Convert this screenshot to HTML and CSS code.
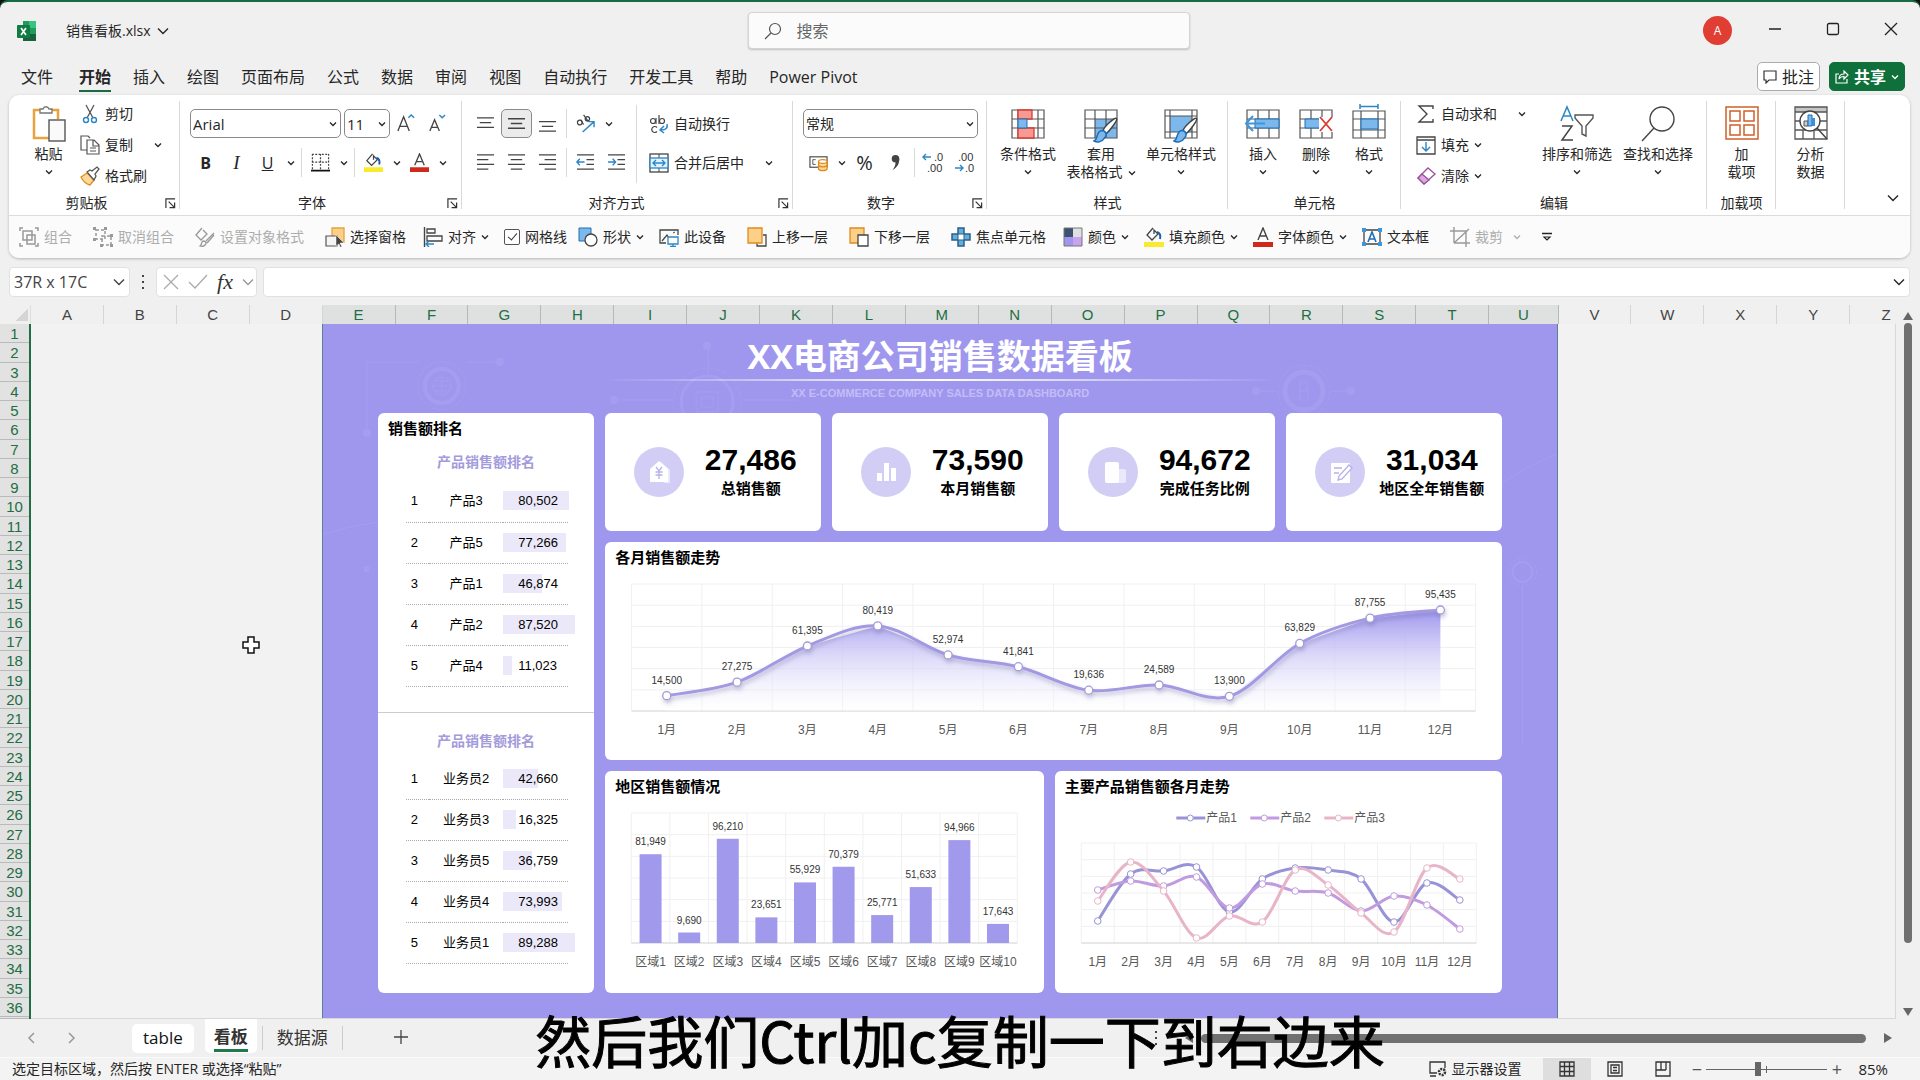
FILE: index.html
```html
<!DOCTYPE html>
<html lang="zh-CN">
<head>
    <meta charset="UTF-8">
    <meta name="viewport" content="width=device-width, initial-scale=1.0">
    <title>销售看板.xlsx</title>
    <link rel="stylesheet" href="styles.css">
</head>
<body>
    <svg class="defs" aria-hidden="true">
        <symbol id="chev" viewBox="0 0 8 8"><path d="M1 2.5l3 3 3-3" fill="none" stroke="currentColor" stroke-width="1.3"/></symbol>
        <symbol id="chev-big" viewBox="0 0 12 12"><path d="M1 3.5l5 5 5-5" fill="none" stroke="currentColor" stroke-width="1.4"/></symbol>
        <symbol id="launch" viewBox="0 0 12 12"><path d="M1 11V1h10M4 4l6 6M10.500 5v5.500H5" fill="none" stroke="#333" stroke-width="1.3"/></symbol>
        <symbol id="bucket" viewBox="0 0 20 20"><path d="M9 1L3 8l5 5 6-6-4-4v4" fill="none" stroke="#444" stroke-width="1.3"/><path d="M13 5c3 1 4 3 3 7" fill="none" stroke="#1a5fa8" stroke-width="2"/><path d="M0 15h20v5H0z" fill="#f8ea2c"/></symbol>
        <symbol id="font-color" viewBox="0 0 20 20"><path d="M5 13l5-12 5 12M7 9h6" fill="none" stroke="#444" stroke-width="1.4"/><path d="M0 15h20v5H0z" fill="#d0291b"/></symbol>
        <symbol id="brush" viewBox="0 0 16 18"><path d="M15 1c1 1-5 9-7 10l-2-2c1-3 8-9 9-8z" fill="#fff" stroke="#444"/><path d="M5 9c3 0 4 3 2 5-2 3-5 3-7 2 3-1 1-6 5-7z" fill="#7db8ec" stroke="#1e6fb8"/></symbol>
    </svg>

    <div class="app">
        <header class="titlebar">
            <svg class="logo" viewBox="0 0 20 20"><path d="M6 0h13v20H6z" fill="#1f9b5c"/><path d="M12 0h7v7h-7z" fill="#35c481"/><path d="M6 13h13v7H6z" fill="#17613d"/><rect y="4" width="13" height="13" rx="1" fill="#107c41"/><path d="M4 7l5 7M9 7l-5 7" stroke="#fff" stroke-width="1.7"/></svg>
            <button class="filename">销售看板.xlsx<svg class="chev-b"><use href="#chev-big"/></svg></button>
            <label class="search">
                <svg viewBox="0 0 18 18" width="18" height="18"><circle cx="11" cy="7" r="5.500" fill="none" stroke="#555" stroke-width="1.200"/><path d="M7 11l-6 6" stroke="#555" stroke-width="1.200"/></svg>
                <input type="text" placeholder="搜索" aria-label="搜索">
            </label>
            <div class="window-buttons">
                <button class="avatar">A</button>
                <button aria-label="最小化"><svg viewBox="0 0 14 14"><path d="M1 7h12" stroke="#222" stroke-width="1.300"/></svg></button>
                <button aria-label="最大化"><svg viewBox="0 0 14 14"><rect x="1.500" y="1.500" width="11" height="11" rx="1.500" fill="none" stroke="#222" stroke-width="1.300"/></svg></button>
                <button aria-label="关闭"><svg viewBox="0 0 14 14"><path d="M1 1l12 12M13 1L1 13" stroke="#222" stroke-width="1.300"/></svg></button>
            </div>
        </header>

        <nav class="menu">
            <button>文件</button>
            <button class="active">开始</button>
            <button>插入</button>
            <button>绘图</button>
            <button>页面布局</button>
            <button>公式</button>
            <button>数据</button>
            <button>审阅</button>
            <button>视图</button>
            <button>自动执行</button>
            <button>开发工具</button>
            <button>帮助</button>
            <button>Power Pivot</button>
            <div class="menu-right">
                <button class="comments"><svg viewBox="0 0 14 14" width="14" height="14"><path d="M1 1h12v9H6l-3 3v-3H1z" fill="none" stroke="#333" stroke-width="1.200"/></svg>批注</button>
                <button class="share"><svg viewBox="0 0 14 14" width="14" height="14"><path d="M4 4H1v9h11V9M4 9c0-3 2-5 5-5V1l4 4-4 4V6.500C7 6.500 5 7 4 9z" fill="none" stroke="#fff" stroke-width="1.200"/></svg>共享<svg class="chev"><use href="#chev"/></svg></button>
            </div>
        </nav>

        <section class="ribbon">
            <div class="groups">
                <div class="group clipboard">
                    <div class="group-body">
                        <button class="big paste">
                            <svg viewBox="0 0 34 36"><path d="M8 4H2v28h15M20 4h6v9" fill="none" stroke="#e8a33d" stroke-width="2.500"/><path d="M8 7V3h3c1-3 5-3 6 0h3v4z" fill="#fff" stroke="#777" stroke-width="1.300"/><rect x="17" y="14" width="16" height="21" fill="#fafafa" stroke="#555" stroke-width="1.400"/></svg>
                            <span>粘贴</span><svg class="chev"><use href="#chev"/></svg>
                        </button>
                        <div class="stack">
                            <button class="tool"><svg viewBox="0 0 20 20"><path d="M6 1l7 13M14 1L7 14" stroke="#555" stroke-width="1.300"/><circle cx="6" cy="16" r="2.500" fill="none" stroke="#2a86c8" stroke-width="1.400"/><circle cx="14" cy="16" r="2.500" fill="none" stroke="#2a86c8" stroke-width="1.400"/></svg>剪切</button>
                            <button class="tool copy"><svg viewBox="0 0 20 20"><path d="M7 15H1V1h7l2 2M7 5h7l5 5v9H7zM13 5v6h6M10 13h6M10 16h6" fill="none" stroke="#555" stroke-width="1.200"/></svg>复制<svg class="chev"><use href="#chev"/></svg></button>
                            <button class="tool"><svg viewBox="0 0 20 20"><path d="M1 11l6-4 7 7-4 5c-4-1-7-4-9-8z" fill="#fbd99b" stroke="#e08b1d" stroke-width="1.300"/><path d="M7 6l3-2 2 1 5-4 2 2-4 5 1 2-2 4z" fill="#fff" stroke="#555" stroke-width="1.300"/></svg>格式刷</button>
                        </div>
                    </div>
                    <div class="group-label">剪贴板<svg class="launch"><use href="#launch"/></svg></div>
                </div>

                <div class="group font">
                    <div class="group-body two-rows">
                        <div class="row">
                            <span class="select name"><select aria-label="字体"><option>Arial</option></select><svg class="chev"><use href="#chev"/></svg></span>
                            <span class="select size"><select aria-label="字号"><option>11</option></select><svg class="chev"><use href="#chev"/></svg></span>
                            <button class="ico" aria-label="增大字号"><svg viewBox="0 0 20 20"><path d="M2 18L8 3l6 15M4 13h8" fill="none" stroke="#444" stroke-width="1.400"/><path d="M13 4l3-3 3 3" fill="none" stroke="#2a86c8" stroke-width="1.500"/></svg></button>
                            <button class="ico" aria-label="减小字号"><svg viewBox="0 0 20 20"><path d="M3 18L8 6l5 12M5 14h6" fill="none" stroke="#444" stroke-width="1.400"/><path d="M13 1l3 3 3-3" fill="none" stroke="#2a86c8" stroke-width="1.500"/></svg></button>
                        </div>
                        <div class="row">
                            <button class="ico letter"><b>B</b></button>
                            <button class="ico letter serif"><i>I</i></button>
                            <button class="ico letter"><u>U</u></button>
                            <button class="arrow" aria-label="下划线选项"><svg class="chev"><use href="#chev"/></svg></button>
                            <span class="sep"></span>
                            <button class="ico" aria-label="边框"><svg viewBox="0 0 20 20"><path d="M1.500 1v16M10 1v16M18.500 1v16M1 1.500h18M1 9.500h18" fill="none" stroke="#444" stroke-width="1.300" stroke-dasharray="2 1.500"/><path d="M0 18.500h20" stroke="#111" stroke-width="2"/></svg></button>
                            <button class="arrow" aria-label="边框选项"><svg class="chev"><use href="#chev"/></svg></button>
                            <span class="sep"></span>
                            <button class="ico" aria-label="填充颜色"><svg><use href="#bucket"/></svg></button>
                            <button class="arrow" aria-label="填充选项"><svg class="chev"><use href="#chev"/></svg></button>
                            <button class="ico" aria-label="字体颜色"><svg><use href="#font-color"/></svg></button>
                            <button class="arrow" aria-label="颜色选项"><svg class="chev"><use href="#chev"/></svg></button>
                        </div>
                    </div>
                    <div class="group-label">字体<svg class="launch"><use href="#launch"/></svg></div>
                </div>

                <div class="group align">
                    <div class="group-body">
                        <div class="two-rows align-icons">
                            <div class="row">
                                <button class="ico" aria-label="顶端对齐"><svg viewBox="0 0 20 20"><path d="M1 4h18M4 9h12M1 14h18" stroke="#444" stroke-width="1.400"/></svg></button>
                                <button class="ico pressed" aria-label="垂直居中"><svg viewBox="0 0 20 20"><path d="M1 5h18M4 10h12M1 15h18" stroke="#444" stroke-width="1.400"/></svg></button>
                                <button class="ico" aria-label="底端对齐"><svg viewBox="0 0 20 20"><path d="M1 8h18M4 13h12M1 18h18" stroke="#444" stroke-width="1.400"/></svg></button>
                                <span class="sep"></span>
                                <button class="ico" aria-label="方向"><svg viewBox="0 0 20 20"><circle cx="4" cy="9" r="2.500" fill="none" stroke="#444" stroke-width="1.300"/><path d="M5 6l3 5M8 1l5 7" stroke="#444" stroke-width="1.300"/><circle cx="12" cy="5" r="2.300" fill="none" stroke="#444" stroke-width="1.300"/><path d="M7 19L19 8M13 8h6v6" fill="none" stroke="#2a86c8" stroke-width="1.500"/></svg></button>
                                <button class="arrow" aria-label="方向选项"><svg class="chev"><use href="#chev"/></svg></button>
                            </div>
                            <div class="row">
                                <button class="ico" aria-label="左对齐"><svg viewBox="0 0 20 20"><path d="M1 2h18M1 7h12M1 12h18M1 17h12" stroke="#444" stroke-width="1.400"/></svg></button>
                                <button class="ico" aria-label="居中"><svg viewBox="0 0 20 20"><path d="M1 2h18M4 7h12M1 12h18M4 17h12" stroke="#444" stroke-width="1.400"/></svg></button>
                                <button class="ico" aria-label="右对齐"><svg viewBox="0 0 20 20"><path d="M1 2h18M7 7h12M1 12h18M7 17h12" stroke="#444" stroke-width="1.400"/></svg></button>
                                <span class="sep"></span>
                                <button class="ico" aria-label="减少缩进"><svg viewBox="0 0 20 20"><path d="M1 2h18M11 7h8M11 12h8M1 17h18" stroke="#444" stroke-width="1.400"/><path d="M9 9.500H1M4 6L1 9.500 4 13" fill="none" stroke="#2a86c8" stroke-width="1.500"/></svg></button>
                                <button class="ico" aria-label="增加缩进"><svg viewBox="0 0 20 20"><path d="M1 2h18M11 7h8M11 12h8M1 17h18" stroke="#444" stroke-width="1.400"/><path d="M1 9.500h8M6 6l3 3.500L6 13" fill="none" stroke="#2a86c8" stroke-width="1.500"/></svg></button>
                            </div>
                        </div>
                        <span class="sep tall"></span>
                        <div class="two-rows">
                            <div class="row"><button class="tool"><svg viewBox="0 0 20 20"><circle cx="4" cy="7" r="2.500" fill="none" stroke="#444" stroke-width="1.200"/><path d="M7 4v6M10 1v9M8 13.500a3 3 0 1 0 0 4" fill="none" stroke="#444" stroke-width="1.200"/><circle cx="13" cy="7" r="2.500" fill="none" stroke="#444" stroke-width="1.200"/><path d="M18 10c1 4-1 6-6 6M15 12l-4 4 4 3" fill="none" stroke="#2a86c8" stroke-width="1.500"/></svg>自动换行</button></div>
                            <div class="row"><button class="tool merge"><svg viewBox="0 0 20 20"><rect x="1" y="1" width="18" height="18" fill="#fff" stroke="#444" stroke-width="1.300"/><path d="M10 1v18" stroke="#444"/><rect x="1" y="5" width="18" height="10" fill="#e3f1fb" stroke="#2a86c8" stroke-width="1.300"/><path d="M4 10h12M7 7l-3 3 3 3M13 7l3 3-3 3" fill="none" stroke="#2a86c8" stroke-width="1.400"/></svg>合并后居中<svg class="chev"><use href="#chev"/></svg></button></div>
                        </div>
                    </div>
                    <div class="group-label">对齐方式<svg class="launch"><use href="#launch"/></svg></div>
                </div>

                <div class="group number">
                    <div class="group-body two-rows">
                        <div class="row"><span class="select format"><select aria-label="数字格式"><option>常规</option></select><svg class="chev"><use href="#chev"/></svg></span></div>
                        <div class="row">
                            <button class="ico" aria-label="会计格式"><svg viewBox="0 0 20 20"><rect x="1" y="4" width="18" height="11" fill="none" stroke="#555" stroke-width="1.300"/><path d="M7 7H4v5h3" fill="none" stroke="#555"/><path d="M10 9v8c1 2 8 2 9 0V9" fill="#fbd99b" stroke="#e08b1d" stroke-width="1.300"/><ellipse cx="14.500" cy="9" rx="4.500" ry="2" fill="#fff" stroke="#e08b1d" stroke-width="1.300"/><path d="M10 13c1 2 8 2 9 0" fill="none" stroke="#e08b1d" stroke-width="1.300"/></svg></button>
                            <button class="arrow" aria-label="会计选项"><svg class="chev"><use href="#chev"/></svg></button>
                            <button class="ico percent">%</button>
                            <button class="ico" aria-label="千位分隔"><svg viewBox="0 0 20 20"><circle cx="10" cy="6" r="4" fill="#444"/><path d="M14 6c0 5-2 9-7 12 2-3 3-5 3-8z" fill="#444"/></svg></button>
                            <span class="sep"></span>
                            <button class="ico digits" aria-label="增加小数"><svg viewBox="0 0 24 24"><path d="M9 6H1M4 3L1 6l3 3" fill="none" stroke="#2a86c8" stroke-width="1.400"/><text x="12" y="10">.0</text><text x="5" y="21">.00</text></svg></button>
                            <button class="ico digits" aria-label="减少小数"><svg viewBox="0 0 24 24"><text x="5" y="10">.00</text><path d="M2 17h8M7 14l3 3-3 3" fill="none" stroke="#2a86c8" stroke-width="1.400"/><text x="12" y="21">.0</text></svg></button>
                        </div>
                    </div>
                    <div class="group-label">数字<svg class="launch"><use href="#launch"/></svg></div>
                </div>

                <div class="group plain style">
                    <div class="group-body">
                        <button class="big"><svg viewBox="0 0 34 36"><path d="M1 4h32v28H1zM1 13h32M1 22h32M7 4v28M27 4v28" fill="none" stroke="#555" stroke-width="1.200"/><path d="M7 4h14v9H7zM7 22h16v10H7z" fill="#f79a94" stroke="#d83b31" stroke-width="1.300"/><path d="M7 13h9v9H7z" fill="#7db8ec" stroke="#1e6fb8"/></svg><span>条件格式</span><svg class="chev"><use href="#chev"/></svg></button>
                        <button class="big"><svg viewBox="0 0 34 36"><path d="M11 13h22v19H11z" fill="#7db8ec"/><path d="M1 4h32v28H1zM1 13h32M1 22h32M11 4v28M22 4v28" fill="none" stroke="#555" stroke-width="1.200"/><svg x="9" y="11" width="26" height="27"><use href="#brush"/></svg></svg><span>套用</span><span>表格格式<svg class="chev"><use href="#chev"/></svg></span></button>
                        <button class="big"><svg viewBox="0 0 34 36"><path d="M6 10h22v16H6z" fill="#7db8ec"/><path d="M1 4h32v28H1zM1 10h32M1 26h32M6 4v28M28 4v28" fill="none" stroke="#555" stroke-width="1.200"/><svg x="9" y="11" width="26" height="27"><use href="#brush"/></svg></svg><span>单元格样式</span><svg class="chev"><use href="#chev"/></svg></button>
                    </div>
                    <div class="group-label">样式</div>
                </div>

                <div class="group plain cells">
                    <div class="group-body">
                        <button class="big"><svg viewBox="0 0 34 36"><path d="M1 4h32v28H1zM1 13h32M1 22h32M12 4v28M23 4v28" fill="none" stroke="#555" stroke-width="1.200"/><path d="M9 13h24v9H9z" fill="#7db8ec" stroke="#1e6fb8"/><path d="M19 17.500H0M7 10l-7 7.500L7 25" fill="none" stroke="#3c96dd" stroke-width="2"/></svg><span>插入</span><svg class="chev"><use href="#chev"/></svg></button>
                        <button class="big"><svg viewBox="0 0 34 36"><path d="M1 4h32v28H1zM1 13h32M1 22h32M12 4v28M23 4v28" fill="none" stroke="#555" stroke-width="1.200"/><path d="M6 13h14l3 4-3 5H6z" fill="#7db8ec" stroke="#1e6fb8"/><path d="M20 11h14v15H20z" fill="#fff"/><path d="M21 11l12 14M33 11L21 25" stroke="#d83b31" stroke-width="1.800"/></svg><span>删除</span><svg class="chev"><use href="#chev"/></svg></button>
                        <button class="big"><svg viewBox="0 0 34 36"><path d="M1 5h32v27H1zM1 13h32M1 24h32M9 5v27M26 5v27" fill="none" stroke="#555" stroke-width="1.200"/><path d="M9 13h17v10H9z" fill="#7db8ec" stroke="#1e6fb8"/><path d="M8 0.500h18M8-2v5M26-2v5" stroke="#2a86c8" stroke-width="1.500"/></svg><span>格式</span><svg class="chev"><use href="#chev"/></svg></button>
                    </div>
                    <div class="group-label">单元格</div>
                </div>

                <div class="group plain edit">
                    <div class="group-body">
                        <div class="stack">
                            <button class="tool sum"><svg viewBox="0 0 20 20"><path d="M17 5V2H3l8 8-8 8h14v-3" fill="none" stroke="#444" stroke-width="1.400"/></svg>自动求和<svg class="chev"><use href="#chev"/></svg></button>
                            <button class="tool"><svg viewBox="0 0 20 20"><path d="M1 2h18v17H1zM1 5h18" fill="none" stroke="#444" stroke-width="1.300"/><path d="M10 7v9M6 12l4 4 4-4" fill="none" stroke="#2a86c8" stroke-width="1.400"/></svg>填充<svg class="chev"><use href="#chev"/></svg></button>
                            <button class="tool"><svg viewBox="0 0 20 20"><path d="M12 2l7 6-11 10-6-6z" fill="#fff" stroke="#9b4f9f" stroke-width="1.300"/><path d="M6 8l7 6-5 4-6-6z" fill="#d9a8dc" stroke="#9b4f9f" stroke-width="1.300"/></svg>清除<svg class="chev"><use href="#chev"/></svg></button>
                        </div>
                        <button class="big"><svg viewBox="0 0 34 36"><path d="M1 15L7 1l6 14M3 10h8" fill="none" stroke="#2a86c8" stroke-width="1.500"/><path d="M2 20h10L2 34h11" fill="none" stroke="#444" stroke-width="1.500"/><path d="M15 9h18v3l-7 8v10l-4-2v-8l-7-8z" fill="none" stroke="#555" stroke-width="1.400"/></svg><span>排序和筛选</span><svg class="chev"><use href="#chev"/></svg></button>
                        <button class="big"><svg viewBox="0 0 34 36"><circle cx="21" cy="13" r="12" fill="none" stroke="#444" stroke-width="1.400"/><path d="M13 22L1 35" stroke="#444" stroke-width="1.400"/></svg><span>查找和选择</span><svg class="chev"><use href="#chev"/></svg></button>
                    </div>
                    <div class="group-label">编辑</div>
                </div>

                <div class="group plain single">
                    <div class="group-body">
                        <button class="big"><svg viewBox="0 0 34 36"><g fill="none" stroke="#d0602a" stroke-width="1.500"><rect x="1" y="1" width="32" height="32"/><rect x="5" y="5" width="10" height="10"/><rect x="19" y="5" width="10" height="10"/><rect x="5" y="19" width="10" height="10"/><rect x="19" y="19" width="10" height="10"/></g></svg><span>加</span><span>载项</span></button>
                    </div>
                    <div class="group-label">加载项</div>
                </div>

                <div class="group plain single">
                    <div class="group-body">
                        <button class="big"><svg viewBox="0 0 34 36"><path d="M1 1h32v5H1z" fill="#c6c6c6"/><path d="M1 1h32v32H1zM1 6h32M1 15h32M1 24h32M9 24v9M20 24v9" fill="none" stroke="#555" stroke-width="1.300"/><circle cx="16" cy="15" r="10" fill="#fff" stroke="#444" stroke-width="1.400"/><path d="M23 22l10 11" stroke="#444" stroke-width="1.500"/><path d="M10 15h4v5h-4z" fill="#ccc" stroke="#555"/><path d="M14 9h4v11h-4z" fill="#7db8ec" stroke="#1e6fb8"/><path d="M18 12h3v8h-3z" fill="#3c8fd4"/></svg><span>分析</span><span>数据</span></button>
                    </div>
                </div>
                <button class="collapse" aria-label="折叠功能区"><svg class="chev-b"><use href="#chev-big"/></svg></button>
            </div>

            <div class="quick">
                <button class="tool" disabled><svg viewBox="0 0 20 20"><path d="M1 4V1h3M16 1h3v3M19 16v3h-3M4 19H1v-3" fill="none" stroke="#999" stroke-width="1.500"/><path d="M4 4h9v9H4zM8 8h8v9H8z" fill="none" stroke="#999" stroke-width="1.500"/></svg>组合</button>
                <button class="tool" disabled><svg viewBox="0 0 20 20"><path d="M3 3h9v9H3zM9 9h9v9H9z" fill="none" stroke="#999" stroke-width="1.500" stroke-dasharray="3 2"/><path d="M0 0h3v3H0zM11 0h3v3h-3zM0 11h3v3H0zM17 7h3v3h-3zM17 17h3v3h-3zM7 17h3v3H7z" fill="#999"/></svg>取消组合</button>
                <button class="tool" disabled><svg viewBox="0 0 20 20"><path d="M7 1L1 8l5 5 6-6-4-4" fill="none" stroke="#999" stroke-width="1.300"/><path d="M19 6l-8 8M8 14c3 0 4 2 2 4s-5 1-5 1c2-1 1-4 3-5zM19 8l-7 8" fill="none" stroke="#999" stroke-width="1.300"/></svg>设置对象格式</button>
                <button class="tool tight"><svg viewBox="0 0 20 20"><path d="M7 1h12v14H7z" fill="#fcd088" stroke="#e8a33d" stroke-width="1.300"/><path d="M1 9h11v10H1z" fill="#f5f5f5" stroke="#555" stroke-width="1.200"/><path d="M11 8l8 8-4 0 2 4-2 0-1-3-3 2z" fill="#444" stroke="#fff" stroke-width=".5"/></svg>选择窗格</button>
                <button class="tool menu-tool"><svg viewBox="0 0 20 20"><path d="M1.500 0v20" stroke="#444" stroke-width="1.400"/><path d="M4 2h8v4H4zM4 9h15v5H4z" fill="none" stroke="#444" stroke-width="1.300"/><path d="M11 17H3M6 14l-3 3 3 3" fill="none" stroke="#2a86c8" stroke-width="1.400"/></svg>对齐<svg class="chev"><use href="#chev"/></svg></button>
                <label class="tool tighter"><input type="checkbox" checked>网格线</label>
                <button class="tool menu-tool"><svg viewBox="0 0 20 20"><path d="M1 1h12v13H1z" fill="#7db8ec" stroke="#1e6fb8"/><circle cx="13" cy="13" r="6" fill="#fff" stroke="#444" stroke-width="1.300"/></svg>形状<svg class="chev"><use href="#chev"/></svg></button>
                <button class="tool"><svg viewBox="0 0 20 20"><path d="M7 16H1V3h18v5M3 14l5-6 2 3" fill="none" stroke="#444" stroke-width="1.300"/><path d="M14 6l2-1" stroke="#444"/><path d="M9 10h10v7H9zM14 17v3M11 19.500h6" fill="#fff" stroke="#2a86c8" stroke-width="1.300"/></svg>此设备</button>
                <button class="tool"><svg viewBox="0 0 20 20"><path d="M16 8h3v11h-9v-3" fill="none" stroke="#444" stroke-width="1.300"/><path d="M1 1h14v15H1z" fill="#fcd088" stroke="#e08b1d" stroke-width="1.300"/></svg>上移一层</button>
                <button class="tool"><svg viewBox="0 0 20 20"><path d="M1 1h14v15H1z" fill="#fcd088" stroke="#e08b1d" stroke-width="1.300"/><path d="M9 8h10v11H9z" fill="#fff" stroke="#444" stroke-width="1.300"/></svg>下移一层</button>
                <button class="tool tight"><svg viewBox="0 0 20 20"><path d="M7 1h6v6h6v6h-6v6H7v-6H1V7h6z" fill="#5fb0e0" stroke="#2d5f86" stroke-width="1.500"/><path d="M7 7h6v6H7z" fill="#fff" stroke="#2d5f86"/></svg>焦点单元格</button>
                <button class="tool menu-tool"><svg viewBox="0 0 20 20"><path d="M1 1h9v9H1z" fill="#3d5270"/><path d="M10 1h9v9h-9z" fill="#dfe0e4"/><path d="M1 10h9v9H1z" fill="#a096ee"/><path d="M10 10h9v9h-9z" fill="#c6a4ee"/><path d="M1 1h18v18H1z" fill="none" stroke="#777"/></svg>颜色<svg class="chev"><use href="#chev"/></svg></button>
                <button class="tool menu-tool"><svg><use href="#bucket"/></svg>填充颜色<svg class="chev"><use href="#chev"/></svg></button>
                <button class="tool menu-tool"><svg><use href="#font-color"/></svg>字体颜色<svg class="chev"><use href="#chev"/></svg></button>
                <button class="tool"><svg viewBox="0 0 20 20"><path d="M2 3h16v14H2z" fill="none" stroke="#444" stroke-width="1.300"/><path d="M6 15l4-10 4 10M7 12h6" fill="none" stroke="#1e6fb8" stroke-width="1.600"/><path d="M0 1h4v4H0zM16 1h4v4h-4zM0 15h4v4H0zM16 15h4v4h-4z" fill="#3c96dd"/></svg>文本框</button>
                <button class="tool" disabled><svg viewBox="0 0 20 20"><path d="M4 0v16M0 4h16v16M4 16h16M4 16L19 2" fill="none" stroke="#999" stroke-width="1.400"/></svg>裁剪<svg class="chev far"><use href="#chev"/></svg></button>
                <button class="overflow" aria-label="更多"><svg viewBox="0 0 10 10" width="10" height="10"><path d="M0 1.500h10" stroke="#222" stroke-width="1.400"/><path d="M2 5l3 3 3-3z" fill="#fff" stroke="#222" stroke-width="1.200"/></svg></button>
            </div>
        </section>

        <div class="formula-bar">
            <label class="name-box"><input type="text" value="37R x 17C" aria-label="名称框"><svg class="chev-b"><use href="#chev-big"/></svg></label>
            <span class="dots"></span>
            <div class="fx">
                <button aria-label="取消"><svg viewBox="0 0 16 16" width="16" height="16"><path d="M1 1l14 14M15 1L1 15" stroke="#aaa" stroke-width="1.300"/></svg></button>
                <button aria-label="输入"><svg viewBox="0 0 20 16" width="20" height="16"><path d="M1 8l6 6L19 1" fill="none" stroke="#aaa" stroke-width="1.300"/></svg></button>
                <button class="fx-label">fx</button>
                <svg class="chev-b grey"><use href="#chev-big"/></svg>
            </div>
            <label class="formula"><input type="text" aria-label="编辑栏"><svg class="chev-b"><use href="#chev-big"/></svg></label>
        </div>

        <main class="workbook">
            <div class="corner"></div>
            <div class="col-heads" id="cols"></div>
            <div class="row-heads" id="rows"></div>
            <div class="sheet">
                <svg class="cursor" viewBox="0 0 18 18"><path d="M6 1h6v5h5v6h-5v5H6v-5H1V6h5z" fill="#fff" stroke="#111" stroke-width="1.500"/></svg>
                <div class="board">
                    <svg class="pattern" viewBox="0 0 1237 694" preserveAspectRatio="none">
                        <g fill="none" stroke="#fff">
                            <path d="M44 109V38H96M144 38h33M386 22v28M292 76h60M476 76h-56"/>
                            <circle cx="119" cy="62" r="24" stroke-dasharray="3 2"/><circle cx="119" cy="62" r="17" stroke-width="4"/><circle cx="119" cy="62" r="9"/><path d="M110 62h18M119 53v18M112 57h14M112 67h14"/>
                            <circle cx="385" cy="78" r="34" stroke-dasharray="5 2"/><circle cx="385" cy="78" r="26" stroke-width="3"/><path d="M374 68h22v20h-22zM379 73h12v10h-12z"/>
                            <circle cx="983" cy="67" r="26" stroke-dasharray="4 2"/><circle cx="983" cy="67" r="19" stroke-width="5"/><path d="M979 58v18h8v-9h-8M979 58h7v9"/><path d="M935 67h20M1010 67h20"/>
                            <circle cx="1202" cy="248" r="14" stroke-dasharray="3 2"/><circle cx="1202" cy="248" r="10" stroke-width="2"/><path d="M1202 262v160"/>
                            <path d="M1180 160q30-20 57-30M0 210q26-8 56-12"/>
                        </g>
                        <g fill="#fff"><circle cx="44" cy="109" r="4"/><circle cx="177" cy="38" r="4"/><circle cx="385" cy="22" r="4"/><circle cx="292" cy="76" r="4"/><circle cx="935" cy="67" r="4"/><circle cx="1030" cy="67" r="4"/><circle cx="44" cy="245" r="3"/></g>
                    </svg>
                    <div class="board-head">
                        <h1>XX电商公司销售数据看板</h1>
                        <p>XX E-COMMERCE COMPANY SALES DATA DASHBOARD</p>
                    </div>
                    <div class="cards">
                        <section class="card ranking">
                            <h2>销售额排名</h2>
                            <h3>产品销售额排名</h3>
                            <table id="rank-product"></table>
                            <h3 class="second">产品销售额排名</h3>
                            <table id="rank-staff"></table>
                        </section>
                        <section class="kpis">
                            <div class="card kpi"><svg viewBox="0 0 50 50"><circle cx="25" cy="25" r="25"/><path d="M19 22l8-7 9 8v13h-6z" fill="#ebe8fb"/><path d="M16 22l9-8 9 8v13H16z" fill="#fff"/><path d="M22 20l3 4 3-4M25 24v8M21.500 25h7M21.500 28h7" fill="none" stroke="#b7b0ec" stroke-width="1.300"/></svg><p><strong>27,486</strong>总销售额</p></div>
                            <div class="card kpi"><svg viewBox="0 0 50 50"><circle cx="25" cy="25" r="25"/><path d="M16 26h5v8h-5zM23 16h5v18h-5zM30 21h5v13h-5z" fill="#fff"/></svg><p><strong>73,590</strong>本月销售额</p></div>
                            <div class="card kpi"><svg viewBox="0 0 50 50"><circle cx="25" cy="25" r="25"/><rect x="26" y="22" width="12" height="14" rx="2" fill="#ebe8fb"/><rect x="17" y="15" width="14" height="21" rx="2" fill="#fff"/></svg><p><strong>94,672</strong>完成任务比例</p></div>
                            <div class="card kpi"><svg viewBox="0 0 50 50"><circle cx="25" cy="25" r="25"/><rect x="16" y="16" width="19" height="20" rx="1" fill="#fff"/><path d="M19 21h8M19 26h5" stroke="#b7b0ec" stroke-width="1.500"/><path d="M34 18l3 3-10 11-4 1 1-4z" fill="#fff" stroke="#b7b0ec" stroke-width="1.300"/></svg><p><strong>31,034</strong>地区全年销售额</p></div>
                        </section>
                        <section class="card trend"><h2>各月销售额走势</h2><svg id="trend" viewBox="0 0 896 188"></svg></section>
                        <section class="lower">
                            <div class="card region"><h2>地区销售额情况</h2><svg id="region" viewBox="0 0 438 192"></svg></div>
                            <div class="card products"><h2>主要产品销售额各月走势</h2><svg id="products" viewBox="0 0 447 192"></svg></div>
                        </section>
                    </div>
                </div>
            </div>
            <div class="vscroll"><i class="up"></i><span></span><i class="down"></i></div>
        </main>

        <footer class="sheet-tabs">
            <button class="nav" aria-label="上一个"><svg viewBox="0 0 12 12"><path d="M8 1L3 6l5 5" fill="none" stroke="#999" stroke-width="1.500"/></svg></button>
            <button class="nav" aria-label="下一个"><svg viewBox="0 0 12 12"><path d="M4 1l5 5-5 5" fill="none" stroke="#999" stroke-width="1.500"/></svg></button>
            <button class="tab hover">table</button>
            <button class="tab current"><span>看板</span></button>
            <button class="tab last">数据源</button>
            <button class="add" aria-label="新工作表"><svg viewBox="0 0 14 14"><path d="M7 0v14M0 7h14" stroke="#444" stroke-width="1.300"/></svg></button>
            <div class="hscroll"><span class="dots"></span><i class="left"></i><span class="thumb"></span><i class="right"></i></div>
        </footer>

        <div class="status">
            <span class="message">选定目标区域，然后按 ENTER 或选择“粘贴”</span>
            <button class="display"><svg viewBox="0 0 18 16" width="18" height="16"><path d="M8 12H1V1h15v6M1 15h6" fill="none" stroke="#333" stroke-width="1.300"/><circle cx="13" cy="11" r="3" fill="none" stroke="#333" stroke-width="2.500" stroke-dasharray="2 1"/></svg>显示器设置</button>
            <button class="view on" aria-label="普通"><svg viewBox="0 0 16 16"><path d="M1 1h14v14H1zM1 5.500h14M1 10.500h14M5.500 1v14M10.500 1v14" fill="none" stroke="#333" stroke-width="1.300"/></svg></button>
            <button class="view" aria-label="页面布局"><svg viewBox="0 0 16 16"><path d="M1 1h14v14H1zM4 4h8v8H4zM6 6.500h4M6 9.500h4" fill="none" stroke="#333" stroke-width="1.300"/></svg></button>
            <button class="view" aria-label="分页预览"><svg viewBox="0 0 16 16"><path d="M1 1h14v14H1zM6 1v8M11 1v8M1 9h10" fill="none" stroke="#333" stroke-width="1.300"/></svg></button>
            <button class="zoom">−</button>
            <input type="range" min="10" max="190" value="86" aria-label="缩放">
            <button class="zoom">+</button>
            <span class="percent-text">85%</span>
        </div>
        <p class="caption">然后我们Ctrl加c复制一下到右边来</p>
    </div>
    <script src="script.js"></script>
</body>
</html>
```
FILE: styles.css
```css
* {
    box-sizing: border-box;
}

body {
    margin: 0;
    background: #111;
    color: #262626;
    font-family: "Open Sans", "Noto Sans CJK SC", sans-serif;
    font-size: 14px;
    line-height: 18px;
}

button,
input,
select {
    margin: 0;
    padding: 0;
    border: none;
    background: none;
    color: inherit;
    font: inherit;
    white-space: nowrap;
}

h1, h2, h3, p {
    margin: 0;
}

.defs {
    position: absolute;
    width: 0;
    height: 0;
}

.app {
    position: relative;
    display: flex;
    flex-direction: column;
    height: 100vh;
    overflow: hidden;
    background: #f0f0f0;
    border-top: 2px solid #1a6b43;
    border-radius: 8px 8px 0 0;
}

.chev {
    width: 8px;
    height: 8px;
    flex: none;
}

.chev-b {
    width: 12px;
    height: 12px;
    flex: none;
}

.grey {
    color: #999;
}

/* title bar */
.titlebar {
    display: grid;
    grid-template-columns: 1fr 442px 1fr;
    grid-template-areas: "file search win";
    align-items: center;
    height: 59px;
    flex: none;
    padding: 0 0 2px 17px;
}

.logo {
    grid-area: file;
    width: 20px;
    height: 20px;
}

.filename {
    grid-area: file;
    justify-self: start;
    display: flex;
    align-items: center;
    gap: 6px;
    margin-left: 49px;
}

.search {
    grid-area: search;
    display: flex;
    align-items: center;
    gap: 15px;
    height: 37px;
    padding: 0 15px;
    background: #fbfbfb;
    border: 1px solid #d4d4d4;
    border-radius: 4px;
    box-shadow: 0 1px 2px rgba(0, 0, 0, 0.2);
    font-size: 16px;
}

.search input {
    flex: 1;
}

.search input::placeholder {
    color: #666;
}

.window-buttons {
    grid-area: win;
    display: flex;
    justify-content: flex-end;
    align-items: center;
}

.window-buttons button {
    width: 58px;
    height: 29px;
}

.window-buttons svg {
    width: 14px;
    height: 14px;
}

.window-buttons .avatar {
    width: 29px;
    margin-right: 14px;
    border-radius: 50%;
    background: #e03e33;
    color: #fff;
    font-size: 12px;
}

/* menu */
.menu {
    display: flex;
    height: 34px;
    flex: none;
    padding: 1px 15px 0 10px;
    font-size: 16px;
}

.menu > button {
    height: 30px;
    padding: 0 11px;
    line-height: 30px;
}

.menu .active {
    position: relative;
    margin-left: 4px;
    font-weight: bold;
}

.menu .active::after {
    content: "";
    position: absolute;
    right: 11px;
    bottom: 0;
    left: 11px;
    height: 2px;
    background: #1a6b43;
}

.menu-right {
    display: flex;
    gap: 9px;
    margin-left: auto;
}

.menu-right button {
    display: flex;
    align-items: center;
    gap: 5px;
    height: 29px;
    padding: 0 5px;
    border: 1px solid #ababab;
    border-radius: 5px;
    background: #fff;
}

.menu-right .share {
    background: #0f703b;
    border-color: #0f703b;
    color: #fff;
    font-weight: bold;
}

/* ribbon */
.ribbon {
    flex: none;
    margin: 0 10px 0 9px;
    background: #fff;
    border-radius: 10px;
    box-shadow: 0 1px 3px rgba(0, 0, 0, 0.25);
}

.groups {
    display: flex;
    height: 120px;
    padding-top: 3px;
}

.group {
    position: relative;
    display: flex;
    flex-direction: column;
}

.group::after {
    content: "";
    position: absolute;
    top: 3px;
    right: 0;
    bottom: 6px;
    width: 1px;
    background: #d9d9d9;
}

.group-body {
    display: flex;
    height: 95px;
}

.group-label {
    position: relative;
    height: 20px;
    padding-right: 16px;
    line-height: 20px;
    text-align: center;
}

.plain .group-label {
    padding-right: 0;
}

.launch {
    position: absolute;
    top: 5px;
    right: 4px;
    width: 11px;
    height: 11px;
}

.clipboard { width: 171px; }
.font { width: 282px; padding-left: 10px; }
.align { width: 331px; }
.number { width: 194px; padding-left: 10px; }
.style { width: 241px; }
.cells { width: 173px; }
.edit { width: 306px; }
.single { width: 69px; }

.font .group-label,
.number .group-label {
    padding-right: 28px;
}

.align .group-label {
    padding-right: 22px;
}

.align .group-body {
    padding-left: 8px;
}

.stack {
    display: flex;
    flex-direction: column;
}

.tool {
    display: flex;
    align-items: center;
    gap: 5px;
    height: 32px;
    white-space: nowrap;
}

.stack .tool {
    height: 31px;
}

.tool > svg:first-child {
    width: 20px;
    height: 20px;
    flex: none;
}

.tool:disabled {
    color: #adadad;
}

.copy .chev,
.merge .chev,
.sum .chev {
    margin-left: 16px;
}

.big {
    display: flex;
    flex-direction: column;
    align-items: center;
    padding-top: 8px;
}

.big > svg:first-child {
    width: 34px;
    height: 36px;
    margin-bottom: 3px;
    overflow: visible;
}

.big span {
    display: block;
    height: 18px;
    font-size: 14px;
}

.big > .chev {
    margin-top: 5px;
}

.big span .chev {
    margin-left: 5px;
}

.paste {
    width: 71px;
    padding-left: 8px;
}

.style .group-body {
    justify-content: space-between;
    padding: 0 12px 0 13px;
}

.cells .group-body {
    justify-content: space-between;
    padding: 0 15px 0 18px;
}

.edit .group-body {
    padding-left: 15px;
    gap: 11px;
}

.edit .stack {
    width: 115px;
}

.single .group-body {
    justify-content: center;
}

.group-body.two-rows {
    display: block;
}

.two-rows {
    padding-top: 6px;
}

.align-icons {
    width: 163px;
}

.row {
    display: flex;
    align-items: center;
    height: 39px;
}

.ico {
    display: flex;
    align-items: center;
    justify-content: center;
    width: 31px;
    height: 29px;
    flex: none;
}

.ico svg {
    width: 19px;
    height: 19px;
}

.pressed {
    background: #ebebeb;
    border: 1px solid #8a8a8a;
    border-radius: 5px;
}

.letter {
    font-size: 16px;
}

.serif {
    font-family: "Liberation Serif", serif;
    font-size: 19px;
}

.percent {
    font-size: 20px;
}

.digits svg {
    width: 24px;
    height: 24px;
    overflow: visible;
}

.digits text {
    font-family: "Liberation Sans", sans-serif;
    font-size: 11px;
    fill: #333;
}

.arrow {
    display: flex;
    align-items: center;
    justify-content: center;
    width: 15px;
    height: 29px;
}

.sep {
    width: 1px;
    height: 29px;
    margin: 0 3px;
    flex: none;
    background: #d9d9d9;
}

.tall {
    height: 78px;
    margin: 7px 12px 0 3px;
}

.select {
    position: relative;
    height: 29px;
    border: 1px solid #8a8a8a;
    border-radius: 5px;
}

.select select {
    width: 100%;
    height: 100%;
    padding-left: 2px;
    appearance: none;
}

.select .chev {
    position: absolute;
    top: 10px;
    right: 3px;
}

.name { width: 151px; margin-right: 3px; font-size: 15px; }
.size { width: 46px; font-size: 15px; }
.format { width: 175px; }

.collapse {
    align-self: flex-end;
    margin: 0 11px 7px auto;
}

.quick {
    display: flex;
    align-items: center;
    gap: 21px;
    height: 43px;
    padding-left: 10px;
    background: #fbfbfb;
    border-top: 1px solid #dcdcdc;
    border-radius: 0 0 10px 10px;
}

.quick .tight { margin-right: -4px; }
.quick .tighter { margin-right: -10px; }
.quick .menu-tool { margin-right: -6px; }
.quick .far { margin-left: 5px; }
.quick input {
    appearance: none;
    width: 16px;
    height: 16px;
    border: 1px solid #555;
    border-radius: 2px;
    background: #fff;
}

.quick input:checked::after {
    content: "";
    display: block;
    width: 4px;
    height: 8px;
    margin: 1px 0 0 5px;
    border: solid #333;
    border-width: 0 1px 1px 0;
    rotate: 40deg;
}

/* formula bar */
.formula-bar {
    display: flex;
    height: 30px;
    flex: none;
    margin: 9px 10px 8px 9px;
}

.name-box,
.fx,
.formula {
    display: flex;
    align-items: center;
    background: #fff;
    border: 1px solid #e1e1e1;
    border-radius: 4px;
}

.name-box {
    width: 121px;
    padding: 0 4px;
    color: #444;
    font-size: 16px;
}

.name-box input {
    width: 100%;
}

.dots {
    width: 2px;
    height: 14px;
    margin: 8px 12px;
    background: repeating-linear-gradient(#444 0 2px, transparent 2px 6px);
}

.fx {
    justify-content: space-between;
    width: 101px;
    padding: 0 2px 0 6px;
}

.fx svg {
    display: block;
}

.fx-label {
    color: #333;
    font: italic 22px "Liberation Serif", serif;
}

.formula {
    flex: 1;
    margin-left: 6px;
    padding-right: 4px;
}

.formula input {
    flex: 1;
}

/* workbook */
.workbook {
    display: grid;
    grid-template-columns: 31px 1fr 24px;
    grid-template-rows: 19px 1fr;
    flex: 1;
    min-height: 0;
    font-family: "Liberation Sans", "Noto Sans CJK SC", sans-serif;
}

.corner {
    border-right: 1px solid #ddd;
    background: linear-gradient(135deg, transparent 50%, #d5d5d5 50%) 16px 4px / 12px 12px no-repeat;
}

/* column U is a little narrower than the others */
.col-heads {
    display: grid;
    grid-template-columns: repeat(20, 3.91%) 3.72% repeat(5, 3.91%);
    overflow: hidden;
    color: #444;
    font-size: 15px;
    line-height: 20px;
    text-align: center;
}

.col-heads span {
    border-right: 1px solid #d5d5d5;
    border-bottom: 1px solid #ccc;
}

.col-heads .picked {
    background: #dfe1e0;
    border-right-color: #b4b8b6;
    border-bottom: 2px solid #1f6e45;
    color: #1f6e45;
}

.row-heads {
    grid-column: 1;
    display: flex;
    flex-direction: column;
    overflow: hidden;
    background: #e1e2e1;
    border-right: 2px solid #1f6e45;
    color: #1f6e45;
    font-size: 15px;
    text-align: center;
}

.row-heads span {
    flex: 1;
    min-height: 0;
    border-bottom: 1px solid #b9bbba;
    line-height: 20px;
}

.row-heads .rest {
    flex: 0 0 2px;
}

.sheet {
    position: relative;
    min-height: 0;
    padding-left: 15.6%;
    background: #f2f2f2;
    border-right: 1px solid #d8d8d8;
    border-bottom: 1px solid #d8d8d8;
}

.cursor {
    position: absolute;
    top: 45%;
    left: 11.3%;
    width: 18px;
    height: 18px;
}

.board {
    position: relative;
    display: flex;
    flex-direction: column;
    width: 78.6%;
    height: 100%;
    padding: 0 55px 25px;
    background: #9f97ee;
    border: 1px solid #5b7f95;
    border-width: 0 1px;
}

.pattern {
    position: absolute;
    inset: 0;
    width: 100%;
    height: 100%;
    opacity: 0.06;
}

.board-head {
    position: relative;
    height: 89px;
    flex: none;
    padding-top: 9px;
    color: #fff;
    text-align: center;
}

.board-head h1 {
    font-family: "Open Sans", "Noto Sans CJK SC", sans-serif;
    font-size: 34px;
    line-height: 46px;
}

.board-head h1::after {
    content: "";
    display: block;
    width: 60%;
    height: 2px;
    margin: 0 auto;
    background: linear-gradient(90deg, transparent, #fff, transparent);
}

.board-head p {
    margin-top: 3px;
    color: #c3bdf5;
    font-size: 11px;
    font-weight: bold;
}

.cards {
    position: relative;
    display: grid;
    grid-template-columns: 216fr 896fr;
    grid-template-rows: 118fr 218fr 222fr;
    gap: 11px;
    flex: 1;
    min-height: 0;
}

.card {
    min-width: 0;
    min-height: 0;
    background: #fff;
    border-radius: 6px;
}

.card h2 {
    height: 30px;
    padding-left: 10px;
    color: #000;
    font-size: 15px;
    line-height: 32px;
}

.ranking {
    grid-row: 1 / 4;
}

.ranking h3 {
    height: 38px;
    color: #a39bdc;
    font-size: 14px;
    line-height: 38px;
    text-align: center;
}

.ranking .second {
    height: 47px;
    margin-top: 25px;
    padding-top: 9px;
    border-top: 1px solid #ccc;
}

.ranking table {
    width: 75%;
    margin-left: 28px;
    border-collapse: collapse;
    table-layout: fixed;
    color: #000;
    font-size: 13px;
}

.ranking td {
    position: relative;
    height: 41px;
    padding: 0;
    border-bottom: 1px dotted #aaa;
    text-align: center;
}

.ranking td:first-child {
    width: 23px;
    padding-right: 6px;
}

.ranking td:last-child {
    width: 40%;
    padding-left: 15px;
    text-align: left;
}

.ranking .bar {
    position: absolute;
    top: 10px;
    left: 0;
    height: 19px;
    background: #ebe9f9;
}

.ranking .value {
    position: relative;
}

.kpis {
    display: grid;
    grid-template-columns: repeat(4, 1fr);
    gap: 11px;
}

.kpi {
    display: flex;
    align-items: center;
    gap: 13px;
    padding: 0 17px 0 29px;
}

.kpi svg {
    width: 50px;
    height: 50px;
    flex: none;
}

.kpi circle {
    fill: #d2cdf5;
}

.kpi p {
    flex: 1;
    color: #000;
    font-size: 15px;
    font-weight: bold;
    line-height: 24px;
    text-align: center;
    white-space: nowrap;
}

.kpi strong {
    display: block;
    font-size: 30px;
    line-height: 34px;
}

.lower {
    display: grid;
    grid-template-columns: 438fr 447fr;
    gap: 11px;
    min-height: 0;
}

.trend,
.region,
.products {
    display: flex;
    flex-direction: column;
}

.trend svg,
.region svg,
.products svg {
    flex: 1;
    width: 100%;
    min-height: 0;
}

.grid-line { stroke: #f0f0f0; }
.axis-line { stroke: #d0d0d0; }
.data-label { font-size: 10px; fill: #333; text-anchor: middle; }
.axis-label { font-size: 12px; fill: #595959; text-anchor: middle; }
.legend-label { font-size: 12px; fill: #595959; }

/* scrollbars */
.vscroll {
    grid-area: 1 / 3 / 3 / 4;
    display: flex;
    flex-direction: column;
    align-items: center;
    padding: 7px 0 3px;
}

.vscroll span {
    flex: 0 0 88%;
    width: 8px;
    margin-top: 3px;
    border-radius: 4px;
    background: #707070;
}

.vscroll .down {
    margin-top: auto;
}

.up, .down, .left, .right {
    border: 5px solid transparent;
}

.up { border-top: 0; border-bottom: 8px solid #666; }
.down { border-bottom: 0; border-top: 8px solid #666; }
.left { border-left: 0; border-right: 8px solid #666; }
.right { border-right: 0; border-left: 8px solid #666; }

.sheet-tabs {
    display: flex;
    align-items: center;
    height: 38px;
    flex: none;
    padding-left: 12px;
    font-size: 17px;
}

.nav {
    width: 39px;
}

.nav svg {
    width: 12px;
    height: 12px;
}

.add svg {
    width: 14px;
    height: 14px;
}

.tab {
    height: 29px;
    padding: 0 11px;
    color: #333;
}

.tab.hover {
    margin: 0 11px 0 42px;
    background: #fff;
    border-radius: 5px;
    color: #111;
}

.tab.current {
    align-self: flex-start;
    height: 34px;
    padding: 0 9px;
    background: #fff;
    border-radius: 0 0 5px 5px;
    font-weight: bold;
}

.current span {
    display: block;
    height: 31px;
    line-height: 32px;
    border-bottom: 3px solid #1f7a4b;
}

.tab.last {
    height: 24px;
    margin-left: 5px;
    padding: 0 14px;
    border: solid #ccc;
    border-width: 0 1px;
}

.add {
    margin-left: 51px;
}

.hscroll {
    display: flex;
    align-items: center;
    width: 737px;
    margin: 0 28px 0 auto;
}

.hscroll .dots {
    margin: 0 28px 0 0;
}

.hscroll .thumb {
    flex: 1;
    height: 9px;
    margin: 0 18px 0 8px;
    border-radius: 5px;
    background: #707070;
}

.status {
    display: flex;
    align-items: center;
    height: 23px;
    flex: none;
    padding: 0 32px 0 12px;
    background: #f3f3f3;
    border-top: 1px solid #fafafa;
}

.message {
    margin-right: auto;
}

.display {
    display: flex;
    align-items: center;
    gap: 4px;
    margin-right: 22px;
}

.view {
    width: 48px;
    height: 23px;
}

.view svg {
    display: block;
    width: 16px;
    height: 16px;
    margin: auto;
}

.view.on {
    background: #dedede;
}

.zoom {
    width: 19px;
    color: #555;
    font-size: 18px;
}

.status input {
    appearance: none;
    width: 121px;
    height: 15px;
    background: linear-gradient(#666, #666) center / 100% 1px no-repeat, linear-gradient(#666, #666) center / 1px 7px no-repeat;
}

.status input::-webkit-slider-thumb {
    appearance: none;
    width: 6px;
    height: 14px;
    background: #666;
}

.percent-text {
    margin-left: 12px;
    font-size: 15px;
}

.caption {
    position: absolute;
    right: 0;
    bottom: 5px;
    left: 0;
    color: #000;
    font-family: "Noto Sans CJK SC", sans-serif;
    font-size: 56px;
    line-height: 72px;
    text-align: center;
    pointer-events: none;
    -webkit-text-stroke: 1px #000;
}
```
FILE: script.js
```js
const months = ["1月", "2月", "3月", "4月", "5月", "6月", "7月", "8月", "9月", "10月", "11月", "12月"];

// column and row headings
const cols = document.getElementById("cols");
"ABCDEFGHIJKLMNOPQRSTUVWXYZ".split("").forEach((letter) => {
    const span = document.createElement("span");
    span.textContent = letter;
    if (letter >= "E" && letter <= "U") span.className = "picked";
    cols.appendChild(span);
});

const rows = document.getElementById("rows");
for (let i = 1; i <= 37; i++) {
    const span = document.createElement("span");
    if (i <= 36) span.textContent = i;
    else span.className = "rest";
    rows.appendChild(span);
}

// ranking tables
function ranking(id, data) {
    const max = Math.max(...data.map((d) => d[1]));
    document.getElementById(id).innerHTML = data.map((d, i) => `<tr><td>${i + 1}</td><td>${d[0]}</td>
        <td><span class="bar" style="width: ${Math.round(d[1] / max * 110)}%"></span><span class="value">${d[1].toLocaleString("en-US")}</span></td></tr>`).join("");
}

ranking("rank-product", [["产品3", 80502], ["产品5", 77266], ["产品1", 46874], ["产品2", 87520], ["产品4", 11023]]);
ranking("rank-staff", [["业务员2", 42660], ["业务员3", 16325], ["业务员5", 36759], ["业务员4", 73993], ["业务员1", 89288]]);

// charts
function grid(box, count) {
    let out = "";
    for (let i = 0; i <= count; i++) {
        const x = box.x + box.w * i / count;
        out += `<path class="grid-line" d="M${x} ${box.y}V${box.y + box.h}"/>`;
    }
    for (let i = 0; i < 6; i++) {
        const y = box.y + box.h * i / 6;
        out += `<path class="grid-line" d="M${box.x} ${y}H${box.x + box.w}"/>`;
    }
    return out + `<path class="axis-line" d="M${box.x} ${box.y + box.h}H${box.x + box.w}"/>`;
}

function place(box, data, max) {
    return data.map((v, i) => [box.x + box.w * (i + 0.5) / data.length, box.y + box.h * (1 - v / max)]);
}

function smooth(p) {
    let d = `M${p[0]}`;
    for (let i = 0; i < p.length - 1; i++) {
        const a = p[i - 1] || p[i], b = p[i], c = p[i + 1], e = p[i + 2] || c;
        d += `C${b[0] + (c[0] - a[0]) / 6} ${b[1] + (c[1] - a[1]) / 6} ${c[0] - (e[0] - b[0]) / 6} ${c[1] - (e[1] - b[1]) / 6} ${c}`;
    }
    return d;
}

function labels(points, names, y) {
    return points.map((p, i) => `<text class="axis-label" x="${p[0]}" y="${y}">${names[i]}</text>`).join("");
}

function drawTrend() {
    const box = { x: 26, y: 12, w: 844, h: 127 };
    const data = [14500, 27275, 61395, 80419, 52974, 41841, 19636, 24589, 13900, 63829, 87755, 95435];
    const p = place(box, data, 120000);
    const base = box.y + box.h;
    document.getElementById("trend").innerHTML = `
        <defs>
            <linearGradient id="fade" x1="0" y1="0" x2="0" y2="1"><stop offset="0" stop-color="#9f97ee"/><stop offset="1" stop-color="#fff" stop-opacity=".3"/></linearGradient>
            <filter id="shadow" x="-5%" y="-20%" width="110%" height="150%"><feDropShadow dx="1" dy="3" stdDeviation="2" flood-color="#5a5290" flood-opacity=".35"/></filter>
        </defs>
        ${grid(box, 12)}
        <path d="M${p.join("L")}L${p[11][0]} ${base}L${p[0][0]} ${base}z" fill="url(#fade)"/>
        <g filter="url(#shadow)">
            <path d="${smooth(p)}" fill="none" stroke="#a299e2" stroke-width="3"/>
            ${p.map((q) => `<circle cx="${q[0]}" cy="${q[1]}" r="4" fill="#fff" stroke="#a39bd6" stroke-width="1.3"/>`).join("")}
        </g>
        ${p.map((q, i) => `<text class="data-label" x="${q[0]}" y="${q[1] - 12}">${data[i].toLocaleString("en-US")}</text>`).join("")}
        ${labels(p, months, 162)}`;
}

function drawRegion() {
    const box = { x: 26, y: 12, w: 386, h: 130 };
    const data = [81949, 9690, 96210, 23651, 55929, 70379, 25771, 51633, 94966, 17643];
    const p = place(box, data, 120000);
    document.getElementById("region").innerHTML = grid(box, 10) + p.map((q, i) => `
        <rect x="${q[0] - 11}" y="${q[1]}" width="22" height="${box.y + box.h - q[1]}" fill="#a199ec"/>
        <text class="data-label" x="${q[0]}" y="${q[1] - 9}">${data[i].toLocaleString("en-US")}</text>`).join("")
        + labels(p, data.map((v, i) => "区域" + (i + 1)), 165);
}

function drawProducts() {
    const box = { x: 26, y: 42, w: 395, h: 100 };
    const series = [
        { name: "产品1", color: "#9893d6", data: [22, 69, 72, 76, 31, 64, 75, 73, 64, 21, 60, 43] },
        { name: "产品2", color: "#c19bdf", data: [53, 62, 57, 66, 35, 59, 52, 50, 32, 47, 38, 14] },
        { name: "产品3", color: "#e8b5c8", data: [42, 81, 52, 5, 27, 21, 73, 58, 30, 11, 75, 64] }
    ];
    let out = grid(box, 12);
    series.forEach((s, n) => {
        const p = place(box, s.data, 100);
        const x = 121 + n * 74;
        out += `<path d="${smooth(p)}" fill="none" stroke="${s.color}" stroke-width="3"/>`;
        out += p.map((q) => `<circle cx="${q[0]}" cy="${q[1]}" r="3.3" fill="#fff" stroke="${s.color}"/>`).join("");
        out += `<path d="M${x} 17h29" stroke="${s.color}" stroke-width="3"/><circle cx="${x + 14}" cy="17" r="3" fill="#fff" stroke="${s.color}"/>
            <text class="legend-label" x="${x + 30}" y="21">${s.name}</text>`;
    });
    document.getElementById("products").innerHTML = out + labels(place(box, series[0].data, 100), months, 165);
}

drawTrend();
drawRegion();
drawProducts();
```
